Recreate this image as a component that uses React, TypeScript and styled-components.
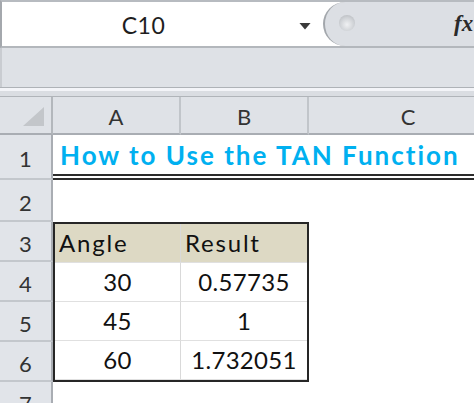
import { Fragment } from "react";
import styled, { createGlobalStyle } from "styled-components";

const GlobalStyle = createGlobalStyle`
  html, body {
    margin: 0;
    padding: 0;
    background: #ffffff;
  }
  body {
    font-family: "Lato", "Liberation Sans", sans-serif;
  }
  * {
    box-sizing: border-box;
  }
`;

const Window = styled.div`
  width: 474px;
  height: 403px;
  overflow: hidden;
  background: #ffffff;
`;

const FormulaBar = styled.div`
  display: flex;
  height: 48px;
  background: #ffffff;
  border-top: 2px solid #b7bbc0;
  border-bottom: 2px solid #b3b7bc;
  border-left: 2px solid #a4a8ad;
`;

const NameBox = styled.div`
  display: flex;
  align-items: center;
  width: 321px;
  flex: none;
`;

const NameText = styled.div`
  flex: 1;
  text-align: center;
  font-size: 23px;
  letter-spacing: 0.5px;
  color: #1e1e1e;
  padding: 2px 0 0 0;
  margin-left: -6px;
`;

const Arrow = styled.div`
  width: 12px;
  height: 7px;
  margin: 4px 12px 0 8px;
  background: #3a3a3a;
  clip-path: polygon(0 0, 100% 0, 50% 100%);
`;

const FormulaArea = styled.div`
  display: flex;
  align-items: center;
  flex: none;
  width: 200px;
  padding-left: 14px;
  background: #dcdfe4;
  border-left: 2px solid #a3a7ac;
  border-radius: 23px 0 0 23px;
`;

const Knob = styled.div`
  width: 16px;
  height: 16px;
  border-radius: 50%;
  background: radial-gradient(circle at 50% 60%, #f0f1f3 0%, #cfd2d6 55%, #aeb1b5 100%);
  margin-top: -2px;
`;

const Fx = styled.div`
  margin-left: 99px;
  font-family: "Liberation Serif", "DejaVu Serif", serif;
  font-style: italic;
  font-weight: bold;
  font-size: 23px;
  color: #2a2a2a;
`;

const Band = styled.div`
  height: 39px;
  background: #dee1e6;
  border-left: 2px solid #c9ccd1;
`;

const Strip = styled.div`
  height: 10px;
  background: linear-gradient(#aeb2b7 0 1px, #f3f4f8 1px 4px, #dadde2 4px);
  border-bottom: 1px solid #b0b4b9;
`;

const Sheet = styled.div`
  display: grid;
  grid-template-columns: 53px 128px 128px 200px;
  grid-template-rows: 38px 45px 42px 40px 40px 40px 40px 40px;
  background: #ffffff;
`;

const Corner = styled.div`
  grid-row: 1;
  grid-column: 1;
  display: flex;
  align-items: flex-end;
  justify-content: flex-end;
  padding: 0 7px 7px 0;
  background: #dfe2e7;
  border-right: 2px solid #b3b7bc;
  border-bottom: 2px solid #a9adb3;
`;

const Triangle = styled.div`
  width: 21px;
  height: 19px;
  background: #c3c6ca;
  clip-path: polygon(100% 0, 100% 100%, 0 100%);
`;

const ColHeader = styled.div`
  grid-row: 1;
  display: flex;
  align-items: center;
  justify-content: center;
  padding-top: 3px;
  background: #dfe2e7;
  border-right: 2px solid #c1c5ca;
  border-bottom: 2px solid #a9adb3;
  font-size: 22px;
  color: #333333;
`;

const RowHeader = styled.div<{ $row: number }>`
  grid-row: ${(p) => p.$row};
  grid-column: 1;
  display: flex;
  align-items: center;
  justify-content: center;
  padding-top: 4px;
  background: #e1e4e9;
  border-right: 2px solid #a9adb3;
  border-bottom: 2px solid #c3c7cc;
  font-size: 22px;
  color: #333333;
`;

const Title = styled.div`
  grid-row: 2;
  grid-column: 2 / -1;
  display: flex;
  align-items: flex-end;
  padding: 0 0 6px 7px;
  border-bottom: 6px double #2b2b2b;
  font-size: 26px;
  letter-spacing: 2px;
  font-weight: bold;
  color: #00b0f0;
  white-space: nowrap;
  line-height: 1;
`;

const DataTable = styled.div`
  grid-row: 4 / 8;
  grid-column: 2 / 4;
  display: grid;
  grid-template-columns: 126px 1fr;
  grid-template-rows: repeat(4, 1fr);
  border: 2px solid #262626;
`;

const Cell = styled.div<{ $head?: boolean; $last?: boolean }>`
  display: flex;
  align-items: flex-end;
  justify-content: ${(p) => (p.$head ? "flex-start" : "center")};
  padding: 0 0 7px ${(p) => (p.$head ? "4px" : "0")};
  background: ${(p) => (p.$head ? "#ddd9c4" : "#ffffff")};
  border-right: ${(p) => (p.$last ? "none" : "1px solid #d9d9d9")};
  border-bottom: 1px solid #e0e0e0;
  font-size: 24px;
  letter-spacing: ${(p) => (p.$head ? "1.8px" : "0.3px")};
  color: #111111;
  line-height: 1;
`;

const rows = [
  ["30", "0.57735"],
  ["45", "1"],
  ["60", "1.732051"],
];

export default function App() {
  return (
    <Window>
      <GlobalStyle />
      <FormulaBar>
        <NameBox>
          <NameText>C10</NameText>
          <Arrow />
        </NameBox>
        <FormulaArea>
          <Knob />
          <Fx>fx</Fx>
        </FormulaArea>
      </FormulaBar>
      <Band />
      <Strip />
      <Sheet>
        <Corner>
          <Triangle />
        </Corner>
        <ColHeader>A</ColHeader>
        <ColHeader>B</ColHeader>
        <ColHeader>C</ColHeader>
        {[1, 2, 3, 4, 5, 6, 7].map((n) => (
          <RowHeader key={n} $row={n + 1}>
            {n}
          </RowHeader>
        ))}
        <Title>How to Use the TAN Function</Title>
        <DataTable>
          <Cell $head>Angle</Cell>
          <Cell $head $last>
            Result
          </Cell>
          {rows.map(([a, b]) => (
            <Fragment key={a}>
              <Cell>{a}</Cell>
              <Cell $last>{b}</Cell>
            </Fragment>
          ))}
        </DataTable>
      </Sheet>
    </Window>
  );
}
